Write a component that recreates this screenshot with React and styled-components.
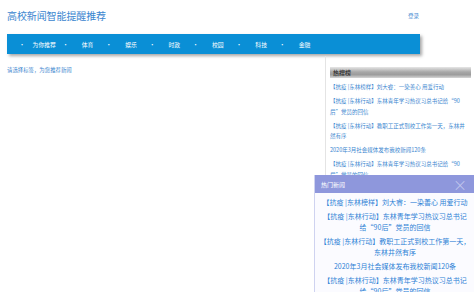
import styled, { createGlobalStyle } from "styled-components";

const GlobalStyle = createGlobalStyle`
  html, body {
    margin: 0;
    padding: 0;
    background: #fff;
    font-family: "Noto Sans CJK SC", "Noto Sans", sans-serif;
    overflow: hidden;
  }
`;

const navItems = ["为你推荐", "体育", "娱乐", "时政", "校园", "科技", "金融"];

const hotList = [
  "【抗疫 |东林榜样】刘大睿：一染善心 用爱行动",
  "【抗疫 |东林行动】东林青年学习热议习总书记给“90后”党员的回信",
  "【抗疫 |东林行动】教职工正式到校工作第一天，东林井然有序",
  "2020年3月社会媒体发布我校新闻120条",
  "【抗疫 |东林行动】东林青年学习热议习总书记给“90后”党员的回信",
];

const App = () => {
  return (
    <Page>
      <GlobalStyle />
      <Header>
        <Title>高校新闻智能提醒推荐</Title>
        <Login>登录</Login>
      </Header>
      <Nav>
        {navItems.map((n) => (
          <NavItem key={n}>
            <Dot>•</Dot>
            <NavLabel>{n}</NavLabel>
          </NavItem>
        ))}
      </Nav>
      <Body>
        <Main>
          <Hint>请选择标签，为您推荐新闻</Hint>
        </Main>
        <Side>
          <SideHead>热搜榜</SideHead>
          {hotList.map((t, i) => (
            <SideLink key={i}>{t}</SideLink>
          ))}
        </Side>
      </Body>
      <Popup>
        <PopupHead>
          <span>热门新闻</span>
          <Close>×</Close>
        </PopupHead>
        <PopupBody>
          {hotList.map((t, i) => (
            <PopupLink key={i}>{t}</PopupLink>
          ))}
        </PopupBody>
      </Popup>
    </Page>
  );
};

const Page = styled.div`
  padding: 0 0 0 7px;
  height: 292px;
  box-sizing: border-box;
  overflow: hidden;
`;

const Header = styled.div`
  display: flex;
  align-items: center;
  justify-content: space-between;
  width: 413px;
  height: 31px;
  padding-bottom: 3px;
`;

const Title = styled.h1`
  margin: 0;
  font-size: 10px;
  font-weight: 400;
  color: #3b86cf;
  letter-spacing: -0.1px;
  line-height: 1;
`;

const Login = styled.a`
  font-size: 5.5px;
  color: #3b86cf;
  margin-right: 1px;
`;

const Nav = styled.ul`
  display: flex;
  align-items: center;
  margin: 0;
  padding: 0 0 0 10px;
  list-style: none;
  width: 403px;
  height: 20px;
  background: #0a8fd6;
  box-shadow: 2px 2px 3px rgba(0, 0, 0, 0.35);
`;

const NavItem = styled.li`
  display: flex;
  align-items: center;
  width: 43.4px;
  flex: none;
  color: #fff;
`;

const Dot = styled.span`
  width: 6px;
  padding-left: 2px;
  font-size: 6px;
`;

const NavLabel = styled.span`
  flex: 1;
  text-align: center;
  padding-left: 3px;
  font-size: 5.8px;
  white-space: nowrap;
`;

const Body = styled.div`
  display: flex;
  margin-top: 2px;
`;

const Main = styled.div`
  width: 318px;
  padding-top: 10px;
`;

const Hint = styled.p`
  margin: 0;
  font-size: 5.4px;
  color: #3b86cf;
`;

const Side = styled.div`
  border-left: 1px solid #e4e4e4;
  padding: 11px 0 0 4px;
  width: 141px;
  height: 230px;
  overflow: hidden;
`;

const SideHead = styled.div`
  height: 11px;
  line-height: 11px;
  padding-left: 3px;
  font-size: 6px;
  font-weight: 700;
  color: #3a3a3a;
  background: linear-gradient(
    to bottom,
    #e6e6e6 0%,
    #a8a8a8 45%,
    #9c9c9c 70%,
    #d6d6d6 100%
  );
  margin-bottom: 4px;
`;

const SideLink = styled.a`
  display: block;
  width: 137px;
  font-size: 5.5px;
  line-height: 10.5px;
  margin-bottom: 3.5px;
  color: #3b86cf;
`;

const Popup = styled.div`
  position: fixed;
  left: 314px;
  top: 175px;
  width: 160px;
  height: 117px;
  overflow: hidden;
  background: #fbfbff;
  border-left: 1px solid #cfd3f0;
`;

const PopupHead = styled.div`
  display: flex;
  align-items: center;
  justify-content: space-between;
  height: 18px;
  padding: 0 8px 0 6px;
  background: #8e97dc;
  color: #fff;
  font-size: 6px;
`;

const Close = styled.span`
  font-size: 14px;
  font-weight: 300;
  color: #c9cdf0;
  line-height: 1;
`;

const PopupBody = styled.div`
  padding: 4px 2px 0;
  text-align: center;
`;

const PopupLink = styled.a`
  display: block;
  font-size: 7px;
  line-height: 11px;
  margin-bottom: 3px;
  color: #2e82d6;
`;

export default App;
